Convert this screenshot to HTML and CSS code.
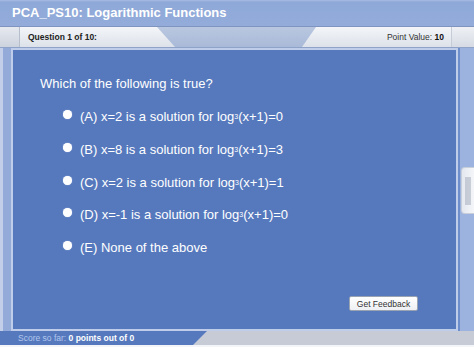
FILE: index.html
```html
<!DOCTYPE html>
<html>
<head>
<meta charset="utf-8">
<link rel="stylesheet" href="styles.css">
</head>
<body>
<div class="app">
  <div class="titlebar">PCA_PS10: Logarithmic Functions</div>
  <div class="tabs">
    <div class="stub-left"></div>
    <div class="qtab">Question 1 of 10:</div>
    <div class="tab-gap"></div>
    <div class="ptab">Point Value: <b>10</b></div>
    <div class="stub-right"></div>
  </div>
  <div class="main">
    <div class="frame-left"></div>
    <div class="panel">
      <div class="question">Which of the following is true?</div>
      <ul class="options">
        <li><span class="dot"></span>(A) x=2 is a solution for log<sub>3</sub>(x+1)=0</li>
        <li><span class="dot"></span>(B) x=8 is a solution for log<sub>3</sub>(x+1)=3</li>
        <li><span class="dot"></span>(C) x=2 is a solution for log<sub>3</sub>(x+1)=1</li>
        <li><span class="dot"></span>(D) x=-1 is a solution for log<sub>3</sub>(x+1)=0</li>
        <li><span class="dot"></span>(E) None of the above</li>
      </ul>
      <div class="actions"><button class="feedback">Get Feedback</button></div>
    </div>
    <div class="frame-right">
      <div class="grip"><span></span></div>
    </div>
  </div>
  <div class="footer">
    <div class="score">Score so far: <b>0 points out of 0</b></div>
    <div class="footer-rest"></div>
  </div>
</div>
</body>
</html>
```
FILE: styles.css
```css
* { box-sizing: border-box; }
html, body { margin: 0; padding: 0; background: #ffffff; }
body { font-family: "Liberation Sans", Arial, sans-serif; }

.app {
  width: 474px;
  height: 347px;
  display: flex;
  flex-direction: column;
  overflow: hidden;
}

.titlebar {
  height: 27px;
  flex: none;
  background: linear-gradient(#a9bde3 0, #8ea8d8 2px, #93acda 100%);
  border-bottom: 1px solid #7f95c0;
  color: #ffffff;
  font-weight: bold;
  font-size: 13px;
  line-height: 25px;
  padding-left: 12px;
}

.tabs {
  height: 21px;
  flex: none;
  display: flex;
  background: linear-gradient(#b9c7e0, #a9bad8);
  border-bottom: 1px solid #8fa3c8;
  font-size: 8.5px;
  color: #222;
  line-height: 20px;
}
.stub-left {
  width: 20px;
  background: linear-gradient(#e6e9ef, #cdd3de);
  border-right: 1px solid #b7bfcc;
}
.qtab {
  width: 155px;
  padding-left: 8px;
  font-weight: bold;
  font-size: 8.5px;
  background: linear-gradient(#f3f5f8, #dde2ea);
  clip-path: polygon(0 0, calc(100% - 18px) 0, 100% 100%, 0 100%);
}
.tab-gap { flex: 1; }
.ptab {
  width: 149px;
  text-align: right;
  padding-right: 7px;
  color: #333;
  background: linear-gradient(#f3f5f8, #dde2ea);
  clip-path: polygon(14px 0, 100% 0, 100% 100%, 0 100%);
}
.ptab b { color: #111; }
.stub-right {
  width: 23px;
  background: linear-gradient(#eef0f4, #d6dbe4);
  border-left: 1px solid #c5ccd8;
}

.main {
  flex: 1;
  display: flex;
  min-height: 0;
}
.frame-left {
  width: 11px;
  flex: none;
  background: linear-gradient(90deg, #c3cfe8 0, #c3cfe8 3px, #94aad8 3px);
}
.panel {
  flex: 1;
  background: #5679bd;
  border: 2px solid #bfcdea;
  display: flex;
  flex-direction: column;
  padding: 26px 0 0 27px;
  color: #ffffff;
  font-size: 13px;
}
.question {
  line-height: 16px;
}
.options {
  list-style: none;
  margin: 0;
  padding: 0 0 0 40px;
}
.options li {
  line-height: 16px;
  padding-top: 17px;
  display: flex;
  align-items: flex-start;
}
.options li + li { padding-top: 16.75px; }
.dot {
  width: 9px;
  height: 9px;
  border-radius: 50%;
  background: #ffffff;
  margin: 1px 8px 0 -17px;
  flex: none;
  box-shadow: 0 0 1px #e0e8f8;
}
.options sub {
  font-size: 7px;
  vertical-align: -1px;
}

.actions {
  display: flex;
  justify-content: flex-end;
  padding-right: 38px;
  margin-top: 40px;
}
.feedback {
  width: 69px;
  height: 15px;
  padding: 0;
  background: linear-gradient(#ffffff, #eef0f3);
  border: 1px solid #9aa3b2;
  border-radius: 2px;
  font-family: "Liberation Sans", Arial, sans-serif;
  font-size: 8.5px;
  color: #333;
}

.frame-right {
  width: 16px;
  flex: none;
  background: linear-gradient(90deg, #6d8dcb 0, #6d8dcb 2px, #9db3df 2px);
  display: flex;
  flex-direction: column;
  padding-top: 119px;
  align-items: flex-end;
}
.grip {
  width: 13px;
  height: 47px;
  background: linear-gradient(90deg, #e4e8ef, #f4f6f9);
  border-radius: 4px 0 0 4px;
  border: 1px solid #c8cfdb;
  border-right: none;
  display: flex;
  justify-content: center;
  align-items: center;
}
.grip span {
  width: 6px;
  height: 28px;
  background-image: radial-gradient(circle, #9aa4b4 0.6px, transparent 0.8px);
  background-size: 2px 2px;
}

.footer {
  height: 16px;
  flex: none;
  display: flex;
  border-bottom: 2px solid #f4f5f8;
  background: #c6cbd6;
}
.score {
  width: 207px;
  background: #5679bd;
  clip-path: polygon(0 0, 100% 0, calc(100% - 14px) 100%, 0 100%);
  color: #b2c6ee;
  font-size: 8.5px;
  line-height: 15px;
  padding-left: 18px;
}
.score b { color: #ffffff; }
.footer-rest { flex: 1; }
```
